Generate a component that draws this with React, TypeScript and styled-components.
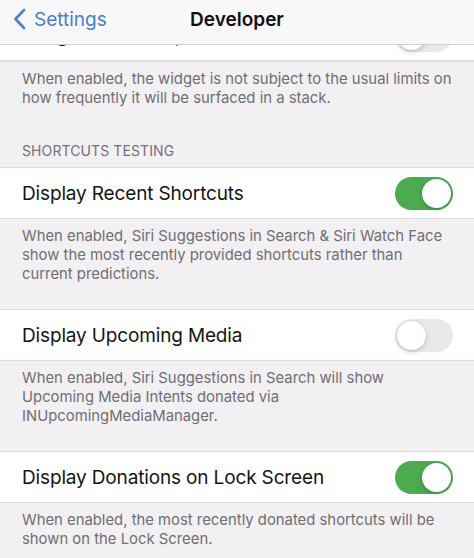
import React from "react";
import styled, { createGlobalStyle } from "styled-components";

const Global = createGlobalStyle`
  html, body { margin: 0; padding: 0; background: #f2f0f2; }
  body { font-family: Inter, "Noto Sans", sans-serif; -webkit-font-smoothing: antialiased; }
`;

const Screen = styled.div`
  width: 474px;
  height: 558px;
  overflow: hidden;
  background: #f2f0f2;
  display: flex;
  flex-direction: column;
`;

const NavBar = styled.header`
  flex: 0 0 44px;
  display: grid;
  grid-template-columns: 1fr auto 1fr;
  align-items: center;
  background: #f9f8f9;
  border-bottom: 1px solid #cfcdd0;
  position: relative;
  z-index: 1;
`;

const BackButton = styled.div`
  display: flex;
  align-items: center;
  gap: 8px;
  padding-left: 13px;
  color: #4a7fce;
  font-size: 19px;
  padding-bottom: 6px;
`;

const NavTitle = styled.h1`
  margin: 0;
  font-size: 19px;
  font-weight: 600;
  color: #111;
  padding-bottom: 6px;
`;

const Content = styled.div`
  display: flex;
  flex-direction: column;
`;

/* the first row is scrolled up under the nav bar; only its bottom edge shows */
const ScrolledRow = styled.div`
  height: 16px;
  overflow: hidden;
  display: flex;
  flex-direction: column;
  justify-content: flex-end;
  border-bottom: 1px solid #dddbdd;
  background: #fff;
`;

const Row = styled.div<{ $top?: boolean }>`
  flex: 0 0 auto;
  height: 50px;
  display: flex;
  align-items: center;
  justify-content: space-between;
  padding: 0 21px 0 22px;
  background: #fff;
  border-top: ${(p) => (p.$top ? "1px solid #dddbdd" : "none")};
  border-bottom: 1px solid #dddbdd;
`;

const RowTitle = styled.span`
  font-size: 19px;
  color: #141414;
  letter-spacing: -0.15px;
`;

const Footer = styled.p<{ $bottom: number }>`
  margin: 0;
  padding: 8px 22px ${(p) => p.$bottom}px;
  font-size: 14.85px;
  line-height: 19px;
  color: #6f6e72;
`;

const Header = styled.div`
  padding: 0 22px 7px;
  font-size: 14px;
  line-height: 18px;
  color: #737276;
  letter-spacing: 0.1px;
`;

const Track = styled.div<{ $on: boolean }>`
  width: 58px;
  height: 33px;
  border-radius: 17px;
  background: ${(p) => (p.$on ? "#4caa4f" : "#ebe8ea")};
  display: flex;
  align-items: center;
  justify-content: ${(p) => (p.$on ? "flex-end" : "flex-start")};
  padding: 2px;
  box-sizing: border-box;
`;

const Knob = styled.div`
  width: 29px;
  height: 29px;
  border-radius: 50%;
  background: #fff;
  box-shadow: 0 2px 5px rgba(0, 0, 0, 0.18), 0 0 0 0.5px rgba(0, 0, 0, 0.06);
`;

const Toggle = ({ on }: { on: boolean }) => (
  <Track $on={on}>
    <Knob />
  </Track>
);

const Chevron = () => (
  <svg width="13" height="22" viewBox="0 0 13 22">
    <path d="M11 2 L2.5 11 L11 20" fill="none" stroke="#4a7fce" strokeWidth="2.6" strokeLinecap="round" strokeLinejoin="round" />
  </svg>
);

export default function App() {
  return (
    <Screen>
      <Global />
      <NavBar>
        <BackButton>
          <Chevron />
          Settings
        </BackButton>
        <NavTitle>Developer</NavTitle>
        <div />
      </NavBar>
      <Content>
        <ScrolledRow>
          <Row>
            <RowTitle>WidgetKit Developer Mode</RowTitle>
            <Toggle on={false} />
          </Row>
        </ScrolledRow>
        <Footer $bottom={34}>
          When enabled, the widget is not subject to the usual limits on how frequently it will be surfaced in a stack.
        </Footer>
        <Header>SHORTCUTS TESTING</Header>
        <Row $top>
          <RowTitle>Display Recent Shortcuts</RowTitle>
          <Toggle on />
        </Row>
        <Footer $bottom={25}>
          When enabled, Siri Suggestions in Search &amp; Siri Watch Face show the most recently provided shortcuts rather than current predictions.
        </Footer>
        <Row $top>
          <RowTitle>Display Upcoming Media</RowTitle>
          <Toggle on={false} />
        </Row>
        <Footer $bottom={25}>
          When enabled, Siri Suggestions in Search will show Upcoming Media Intents donated via INUpcomingMediaManager.
        </Footer>
        <Row $top>
          <RowTitle>Display Donations on Lock Screen</RowTitle>
          <Toggle on />
        </Row>
        <Footer $bottom={20}>
          When enabled, the most recently donated shortcuts will be shown on the Lock Screen.
        </Footer>
      </Content>
    </Screen>
  );
}
